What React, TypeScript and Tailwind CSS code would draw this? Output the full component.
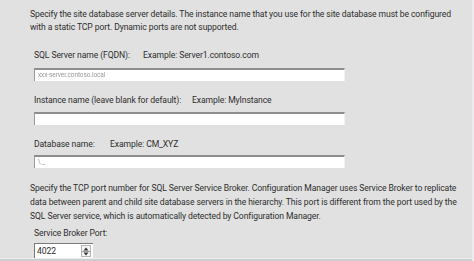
import React from 'react';

function TextBox({ value, top }: { value?: string; top: string }) {
  return (
    <div className={`${top} h-[13px] w-[311px] bg-white border-t-2 border-t-[#8e8e8e] border-l border-l-[#9a9a9a] border-r border-r-[#f2f2f2] flex items-center pl-[3px] overflow-hidden`}>
      {value && (
        <span className="text-[6.5px] text-[#9a9a9a] blur-[0.6px] whitespace-nowrap">{value}</span>
      )}
    </div>
  );
}

function Label({ name, example, width, top }: { name: string; example: string; width: string; top: string }) {
  return (
    <div className={`${top} flex h-[14px] items-center whitespace-nowrap`}>
      <span className={width}>{name}</span>
      <span>{example}</span>
    </div>
  );
}

export default function App() {
  return (
    <div className="relative w-[474px] h-[261px] overflow-hidden bg-[#e1e1e1] text-[#2e2e2e] text-[8.6px] tracking-[-0.1px] font-['Segoe_UI','Roboto',sans-serif]">
      <div className="pl-[30px] pt-[8px]">
        <p className="leading-[13px] whitespace-nowrap">
          Specify the site database server details. The instance name that you use for the site database must be configured
          <br />
          with a static TCP port. Dynamic ports are not supported.
        </p>

        <div className="pl-[4px]">
          <Label top="mt-[14px]" name="SQL Server name (FQDN):" example="Example: Server1.contoso.com" width="w-[109px]" />
          <TextBox top="mt-[6px]" value="xxx-server.contoso.local" />

          <Label top="mt-[12px]" name="Instance name (leave blank for default):" example="Example: MyInstance" width="w-[158px]" />
          <TextBox top="mt-[5px]" />

          <Label top="mt-[12px]" name="Database name:" example="Example: CM_XYZ" width="w-[76px]" />
          <TextBox top="mt-[4px]" value="\  _" />
        </div>

        <p className="mt-[13px] leading-[14px] whitespace-nowrap">
          Specify the TCP port number for SQL Server Service Broker. Configuration Manager uses Service Broker to replicate
          <br />
          data between parent and child site database servers in the hierarchy. This port is different from the port used by the
          <br />
          SQL Server service, which is automatically detected by Configuration Manager.
        </p>

        <div className="pl-[4px] pt-[3px]">
          <div className="h-[14px] flex items-center">Service Broker Port:</div>
          <div className="mt-[3px] h-[15px] w-[59px] bg-white border-t border-l border-[#7a7a7a] flex items-center">
            <span className="pl-[2px] flex-1">4022</span>
            <div className="w-[10px] h-[12px] mr-[2px] flex flex-col items-center justify-center border border-[#b5b5b5] bg-[#f4f4f4]">
              <svg width="6" height="4" viewBox="0 0 6 4">
                <path d="M3 0.5 L5.5 3.5 L0.5 3.5 Z" fill="#333" />
              </svg>
              <div className="w-[8px] h-px bg-[#999]" />
              <svg width="6" height="4" viewBox="0 0 6 4">
                <path d="M0.5 0.5 L5.5 0.5 L3 3.5 Z" fill="#333" />
              </svg>
            </div>
          </div>
        </div>
      </div>

      <div className="absolute left-0 right-0 bottom-0 h-[3px] bg-[#cdcdcd] border-t border-t-[#ececec]" />
      <div className="absolute top-0 bottom-0 right-0 w-[2px] bg-[#ececec]" />
    </div>
  );
}
